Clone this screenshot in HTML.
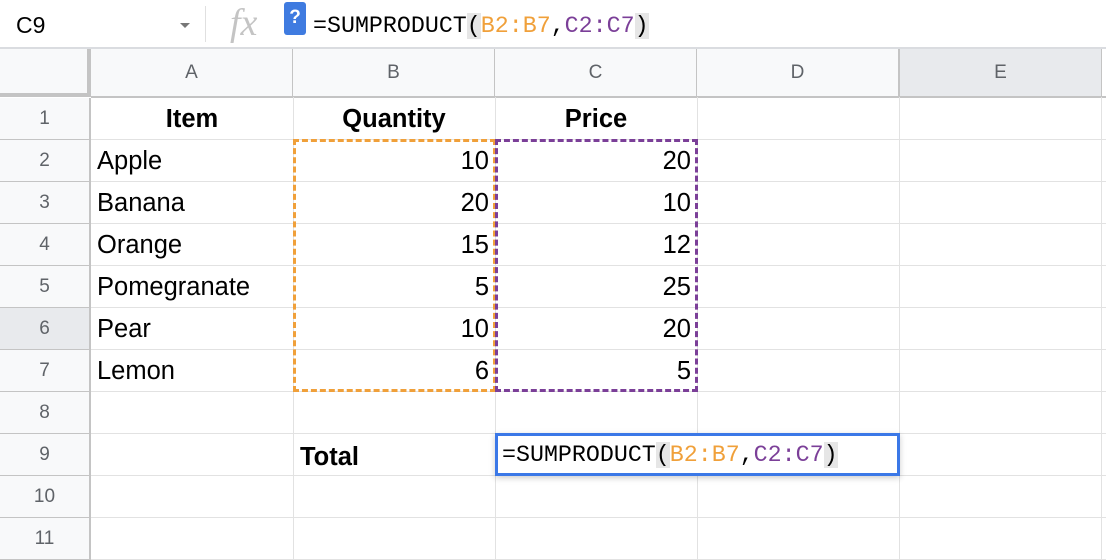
<!DOCTYPE html>
<html><head><style>
*{margin:0;padding:0;box-sizing:border-box}
body{width:1106px;height:560px;background:#fff;position:relative;overflow:hidden;font-family:"Liberation Sans",Arial,sans-serif}
.a{position:absolute}
.hl{position:absolute;left:0;width:1106px;height:1px;background:#e2e2e2}
.vl{position:absolute;top:97px;height:463px;width:1px;background:#e2e2e2}
.ch{position:absolute;top:49px;height:48px;background:#f8f9fa;border-right:1px solid #c4c4c4;color:#5f6368;font-size:19px;text-align:center;line-height:48px}
.rh{position:absolute;left:0;width:91px;height:42px;background:#f8f9fa;border-right:2px solid #c4c4c4;border-bottom:1px solid #c4c4c4;color:#5f6368;font-size:19px;text-align:center;line-height:42px}
.c{position:absolute;height:42px;line-height:44px;font-size:25.5px;color:#000;padding:0 6px;width:202px;white-space:nowrap}
.r{text-align:right}
.b{font-weight:bold;text-align:center}
.mono{font-family:"Liberation Mono",monospace;font-size:23.3px}
.o{color:#f0a03a}.p{color:#7b3f98}.g{background:#e6e6e6}
</style></head><body>
<div class="a" style="left:0;top:0;width:1106px;height:49px;border-bottom:2px solid #dadce0"></div>
<div class="a" style="left:16px;top:12px;font-size:23px">C9</div>
<div class="a" style="left:180px;top:23px;width:0;height:0;border-left:5px solid transparent;border-right:5px solid transparent;border-top:5px solid #777"></div>
<div class="a" style="left:205px;top:6px;width:1px;height:36px;background:#e0e0e0"></div>
<div class="a" style="left:230px;top:1px;font-family:'Liberation Serif',serif;font-style:italic;font-size:38px;color:#c4c4c4">fx</div>
<div class="a" style="left:284px;top:2px;width:22px;height:33px;background:#3f7be0;border-radius:3px;color:#fff;font-weight:bold;font-size:19px;text-align:center;line-height:31px">?</div>
<div class="a mono" style="left:313px;top:13px">=SUMPRODUCT<span class="g">(</span><span class="o">B2:B7</span>,<span class="p">C2:C7</span><span class="g">)</span></div>
<div class="a" style="left:0;top:49px;width:91px;height:48px;background:#f8f9fa;border-right:4px solid #c4c4c4;border-bottom:4px solid #c4c4c4"></div>
<div class="ch" style="left:91px;width:202px">A</div>
<div class="ch" style="left:293px;width:202px">B</div>
<div class="ch" style="left:495px;width:202px">C</div>
<div class="ch" style="left:697px;width:202px">D</div>
<div class="ch" style="left:899px;width:203px;background:#e8eaed;border-left:1px solid #c4c4c4">E</div>
<div class="a" style="left:91px;top:96px;width:1015px;height:2px;background:#c4c4c4"></div>
<div class="hl" style="top:139px"></div><div class="hl" style="top:181px"></div><div class="hl" style="top:223px"></div><div class="hl" style="top:265px"></div><div class="hl" style="top:307px"></div><div class="hl" style="top:349px"></div><div class="hl" style="top:391px"></div><div class="hl" style="top:433px"></div><div class="hl" style="top:475px"></div><div class="hl" style="top:517px"></div><div class="hl" style="top:559px"></div>
<div class="vl" style="left:293px"></div><div class="vl" style="left:495px"></div><div class="vl" style="left:697px"></div><div class="vl" style="left:899px"></div><div class="vl" style="left:1101px"></div>
<div class="rh" style="top:98px">1</div>
<div class="rh" style="top:140px">2</div>
<div class="rh" style="top:182px">3</div>
<div class="rh" style="top:224px">4</div>
<div class="rh" style="top:266px">5</div>
<div class="rh" style="top:308px;background:#e8eaed">6</div>
<div class="rh" style="top:350px">7</div>
<div class="rh" style="top:392px">8</div>
<div class="rh" style="top:434px">9</div>
<div class="rh" style="top:476px">10</div>
<div class="rh" style="top:518px">11</div>
<div class="c b" style="left:91px;top:97px">Item</div>
<div class="c b" style="left:293px;top:97px">Quantity</div>
<div class="c b" style="left:495px;top:97px">Price</div>
<div class="c" style="left:91px;top:139px">Apple</div>
<div class="c" style="left:91px;top:181px">Banana</div>
<div class="c" style="left:91px;top:223px">Orange</div>
<div class="c" style="left:91px;top:265px">Pomegranate</div>
<div class="c" style="left:91px;top:307px">Pear</div>
<div class="c" style="left:91px;top:349px">Lemon</div>
<div class="c r" style="left:293px;top:139px">10</div>
<div class="c r" style="left:293px;top:181px">20</div>
<div class="c r" style="left:293px;top:223px">15</div>
<div class="c r" style="left:293px;top:265px">5</div>
<div class="c r" style="left:293px;top:307px">10</div>
<div class="c r" style="left:293px;top:349px">6</div>
<div class="c r" style="left:495px;top:139px">20</div>
<div class="c r" style="left:495px;top:181px">10</div>
<div class="c r" style="left:495px;top:223px">12</div>
<div class="c r" style="left:495px;top:265px">25</div>
<div class="c r" style="left:495px;top:307px">20</div>
<div class="c r" style="left:495px;top:349px">5</div>
<div class="c" style="left:294px;top:435px;font-weight:bold">Total</div>
<div class="a" style="left:293px;top:139px;width:203px;height:253px;border:3px dashed #f0a03a"></div>
<div class="a" style="left:495px;top:139px;width:203px;height:253px;border:3px dashed #7b3f98"></div>
<div class="a" style="left:495px;top:433px;width:405px;height:43px;border:3px solid #3b78e7;background:#fff;box-shadow:0 2px 6px rgba(0,0,0,.2)"></div>
<div class="a mono" style="left:502px;top:442px">=SUMPRODUCT<span class="g">(</span><span class="o">B2:B7</span>,<span class="p">C2:C7</span><span class="g">)</span></div>
</body></html>
